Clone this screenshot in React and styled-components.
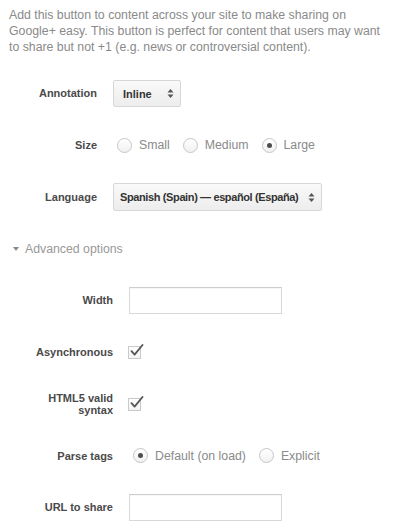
import React from "react";
import styled, { createGlobalStyle } from "styled-components";

const Global = createGlobalStyle`
  html, body { margin: 0; padding: 0; background: #fff; }
  body { font-family: "Liberation Sans", Arial, Helvetica, sans-serif; }
`;

const Page = styled.div`
  width: 400px;
  padding-top: 7px;
`;

const Intro = styled.p`
  margin: 0;
  padding-left: 9px;
  font-size: 12.3px;
  line-height: 16px;
  color: #8a8a8a;
`;

const Form = styled.div`
  margin-top: 12.75px;
  display: flex;
  flex-direction: column;
`;

const Row = styled.div`
  display: grid;
  grid-template-columns: ${(p) => p.$labelW}px 1fr;
  column-gap: 16px;
  align-items: center;
  height: 51.75px;
`;

const Label = styled.div`
  text-align: right;
  font-size: 11px;
  font-weight: bold;
  line-height: 12.5px;
  color: #4a4a4a;
`;

const Select = styled.div`
  box-sizing: border-box;
  display: flex;
  align-items: center;
  justify-content: space-between;
  width: ${(p) => p.$w}px;
  height: ${(p) => p.$h}px;
  padding-left: ${(p) => p.$pad}px;
  padding-right: 6px;
  border: 1px solid #d7d7d7;
  border-radius: 2px;
  background: linear-gradient(#f9f9f9, #ededed);
  font-size: 11px;
  font-weight: bold;
  letter-spacing: ${(p) => (p.$tight ? "-0.38px" : "0")};
  color: #333;
  white-space: nowrap;
`;

const Arrows = () => (
  <svg width="7" height="11" viewBox="0 0 7 11">
    <path d="M0.5 4.5 L3.5 1 L6.5 4.5 Z" fill="#555" />
    <path d="M0.5 6.5 L3.5 10 L6.5 6.5 Z" fill="#555" />
  </svg>
);

const Options = styled.div`
  display: flex;
  align-items: center;
  padding-left: 4px;
`;

const RadioCircle = styled.span`
  box-sizing: border-box;
  position: relative;
  width: 15px;
  height: 15px;
  border-radius: 50%;
  border: 1px solid #c6c6c6;
  background: linear-gradient(#ffffff, #f1f1f1);
  flex: none;
  &::after {
    content: "";
    display: ${(p) => (p.$checked ? "block" : "none")};
    position: absolute;
    left: 4px;
    top: 4px;
    width: 5px;
    height: 5px;
    border-radius: 50%;
    background: #4d4d4d;
  }
`;

const OptionText = styled.span`
  margin-left: 7px;
  margin-right: 13px;
  font-size: 12.3px;
  color: #8a8a8a;
  white-space: nowrap;
`;

const Radio = ({ checked, children }) => (
  <>
    <RadioCircle $checked={checked} />
    <OptionText>{children}</OptionText>
  </>
);

const Box = styled.span`
  box-sizing: border-box;
  position: relative;
  display: block;
  width: 13px;
  height: 13px;
  margin-left: -1px;
  border: 1px solid #c9c9c9;
  background: linear-gradient(#ffffff, #f3f3f3);
`;

const Tick = styled.svg`
  position: absolute;
  left: 1px;
  top: -3px;
`;

const Checkbox = () => (
  <Box>
    <Tick width="14" height="13" viewBox="0 0 14 13">
      <path
        d="M1.5 7.2 L4.6 10.6 L12.5 1"
        fill="none"
        stroke="#555"
        strokeWidth="1.8"
        strokeLinecap="round"
        strokeLinejoin="round"
      />
    </Tick>
  </Box>
);

const TextInput = styled.div`
  box-sizing: border-box;
  width: 153px;
  height: 27px;
  border: 1px solid #d8d8d8;
  border-top-color: #cdcdcd;
  background: #fff;
  box-shadow: inset 0 1px 1px rgba(0, 0, 0, 0.04);
`;

const Toggle = styled.div`
  display: flex;
  align-items: center;
  gap: 6px;
  height: 51.75px;
  padding-left: 13px;
  font-size: 12.3px;
  color: #999;
`;

const Caret = () => (
  <svg width="6" height="4" viewBox="0 0 6 4">
    <path d="M0 0 L6 0 L3 4 Z" fill="#8a8a8a" />
  </svg>
);

export default function App() {
  return (
    <Page>
      <Global />
      <Intro>
        Add this button to content across your site to make sharing on
        <br />
        Google+ easy. This button is perfect for content that users may want
        <br />
        to share but not +1 (e.g. news or controversial content).
      </Intro>
      <Form>
        <Row $labelW={97}>
          <Label>Annotation</Label>
          <Select $w={68} $h={27} $pad={9}>
            Inline
            <Arrows />
          </Select>
        </Row>
        <Row $labelW={97}>
          <Label>Size</Label>
          <Options>
            <Radio>Small</Radio>
            <Radio>Medium</Radio>
            <Radio checked>Large</Radio>
          </Options>
        </Row>
        <Row $labelW={97}>
          <Label>Language</Label>
          <Select $w={209} $h={28} $pad={6} $tight>
            Spanish (Spain) — español (España)
            <Arrows />
          </Select>
        </Row>
        <Toggle>
          <Caret />
          Advanced options
        </Toggle>
        <Row $labelW={113}>
          <Label>Width</Label>
          <TextInput />
        </Row>
        <Row $labelW={113}>
          <Label>Asynchronous</Label>
          <Checkbox />
        </Row>
        <Row $labelW={113}>
          <Label>
            HTML5 valid
            <br />
            syntax
          </Label>
          <Checkbox />
        </Row>
        <Row $labelW={113}>
          <Label>Parse tags</Label>
          <Options>
            <Radio checked>Default (on load)</Radio>
            <Radio>Explicit</Radio>
          </Options>
        </Row>
        <Row $labelW={113}>
          <Label>URL to share</Label>
          <TextInput />
        </Row>
      </Form>
    </Page>
  );
}
